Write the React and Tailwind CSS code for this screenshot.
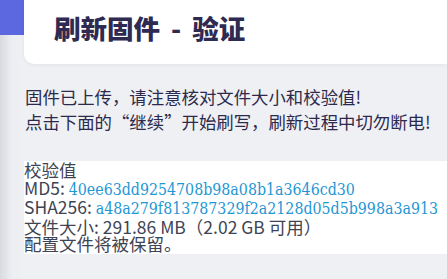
export default function App() {
  const font = { fontFamily: '"Noto Sans CJK SC", "Noto Sans", sans-serif' }

  return (
    <div className="flex h-[279px] w-[447px] overflow-hidden bg-[#eff0f4]" style={font}>
      {/* left rail */}
      <div className="flex w-[24px] shrink-0 flex-col">
        <div className="h-[35px] bg-[#5c68e0]" />
        <div className="flex-1 bg-gradient-to-r from-[#d9dae0] via-[#eceef2] to-[#eff0f4]" />
      </div>

      <div className="flex min-w-0 flex-1 flex-col">
        {/* header card */}
        <div className="h-[64px] shrink-0 rounded-bl-[10px] bg-white pl-[30px] pt-[15px] shadow-[0_1px_4px_rgba(0,0,0,0.06)]">
          <h1 className="flex items-center whitespace-nowrap text-[26.5px] font-black leading-none text-[#2e2a52]">
            <span>刷新固件</span>
            <span className="mx-[11px]">-</span>
            <span>验证</span>
          </h1>
        </div>

        {/* notice */}
        <div className="mt-[20px] whitespace-nowrap pl-px text-[17.4px] leading-[25px] text-[#2c2a4c]">
          <p>固件已上传，请注意核对文件大小和校验值!</p>
          <p>点击下面的“继续”开始刷写，刷新过程中切勿断电!</p>
        </div>

        {/* checksum box */}
        <div className="mt-[27px] whitespace-nowrap bg-white text-[17.5px] leading-[17.5px] text-[#3e4453]">
          <div>校验值</div>
          <div>
            MD5:{' '}
            <span className="font-['DejaVu_Serif',serif] text-[15.8px] text-[#1f97d4] [font-stretch:condensed]">
              40ee63dd9254708b98a08b1a3646cd30
            </span>
          </div>
          <div>
            SHA256:{' '}
            <span className="font-['DejaVu_Serif',serif] text-[15.8px] text-[#1f97d4] [font-stretch:condensed]">
              a48a279f813787329f2a2128d05d5b998a3a913
            </span>
          </div>
          <div>文件大小: 291.86 MB（2.02 GB 可用）</div>
          <div className="pb-px">配置文件将被保留。</div>
        </div>
      </div>
    </div>
  )
}
